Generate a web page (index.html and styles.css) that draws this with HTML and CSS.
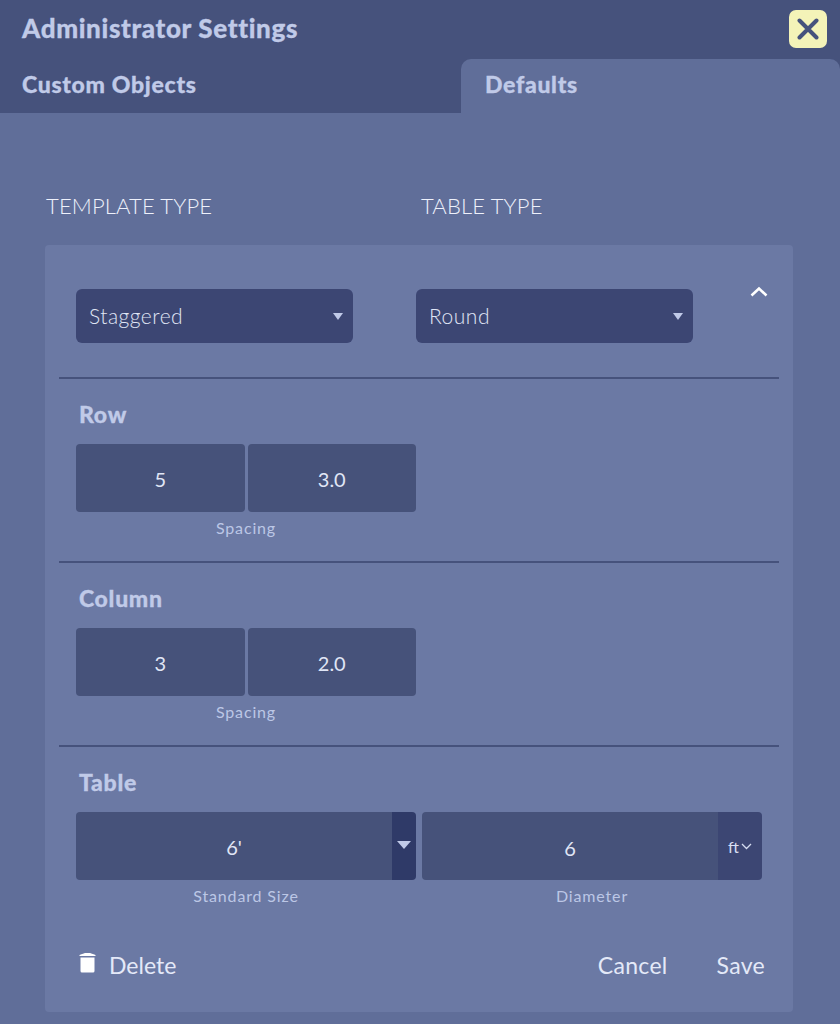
FILE: index.html
```html
<!DOCTYPE html>
<html lang="en">
<head>
    <meta charset="UTF-8">
    <meta name="viewport" content="width=device-width, initial-scale=1.0">
    <title>Administrator Settings</title>
    <link rel="stylesheet" href="styles.css">
</head>
<body>
    <header class="top">
        <div class="title-row">
            <h1>Administrator Settings</h1>
            <button class="close" aria-label="Close">
                <svg width="22" height="22" viewBox="0 0 22 22"><path d="M2.5 2.5 L19.5 19.5 M19.5 2.5 L2.5 19.5" fill="none" stroke="#46527c" stroke-width="4" stroke-linecap="round"/></svg>
            </button>
        </div>
        <nav class="tabs">
            <a class="tab">Custom Objects</a>
            <a class="tab active">Defaults</a>
        </nav>
    </header>

    <main class="content">
        <div class="col-labels">
            <span>TEMPLATE TYPE</span>
            <span>TABLE TYPE</span>
        </div>

        <div class="card">
            <div class="selects">
                <div class="select">Staggered<i class="caret"></i></div>
                <div class="select">Round<i class="caret"></i></div>
                <svg class="collapse" width="20" height="12" viewBox="0 0 20 12"><path d="M2.5 9.5 L10 2.5 L17.5 9.5" fill="none" stroke="#fff" stroke-width="2.6"/></svg>
            </div>

            <section class="group">
                <h2>Row</h2>
                <div class="fields">
                    <div class="box">5</div>
                    <div class="box">3.0</div>
                </div>
                <div class="hint">Spacing</div>
            </section>

            <section class="group">
                <h2>Column</h2>
                <div class="fields">
                    <div class="box">3</div>
                    <div class="box">2.0</div>
                </div>
                <div class="hint">Spacing</div>
            </section>

            <section class="group group-last">
                <h2>Table</h2>
                <div class="fields fields-wide">
                    <div class="wide-field">
                        <div class="box box-flat">6'</div>
                        <div class="arrow-cell"><i class="caret caret-big"></i></div>
                    </div>
                    <div class="wide-field">
                        <div class="box box-flat box-low">6</div>
                        <div class="unit-cell">ft<svg width="11" height="7" viewBox="0 0 11 7"><path d="M1 1 L5.5 5.5 L10 1" fill="none" stroke="#d5dcf0" stroke-width="1.3"/></svg></div>
                    </div>
                </div>
                <div class="hints-wide">
                    <div class="hint">Standard Size</div>
                    <div class="hint">Diameter</div>
                </div>
            </section>

            <footer class="actions">
                <a class="delete">
                    <svg width="17" height="21" viewBox="0 0 17 21"><path d="M0.5 3 C3 1.6 5.5 1.5 6 1 L11 1 C11.5 1.5 14 1.6 16.5 3 L16.5 4 L0.5 4 Z M1.5 5.4 L15.5 5.4 L15.5 19 Q15.5 20.5 14 20.5 L3 20.5 Q1.5 20.5 1.5 19 Z" fill="#fff"/></svg>
                    Delete
                </a>
                <div class="actions-right">
                    <a>Cancel</a>
                    <a>Save</a>
                </div>
            </footer>
        </div>
    </main>
</body>
</html>
```

FILE: styles.css
```css
* {
    box-sizing: border-box;
}

html, body {
    height: 1024px;
}

body {
    margin: 0;
    overflow: hidden;
    font-family: Lato, "Noto Sans", sans-serif;
    background-color: #606e99;
    color: #e4e9f8;
}

.top {
    background-color: #46527c;
    height: 113px;
}

.title-row {
    height: 59px;
    display: flex;
    justify-content: space-between;
    padding: 10px 13px 0 22px;
}

h1 {
    margin: 0;
    padding-top: 2px;
    font-size: 26px;
    line-height: 32px;
    font-weight: 900;
    letter-spacing: 0.65px;
    -webkit-text-stroke: 0.3px #c0cae8;
    color: #c0cae8;
}

.close {
    width: 38px;
    height: 38px;
    padding: 0;
    border: 0;
    border-radius: 7px;
    background-color: #f4f3b8;
    display: flex;
    align-items: center;
    justify-content: center;
}

.tabs {
    display: flex;
    height: 54px;
}

.tab {
    font-size: 23px;
    font-weight: 900;
    line-height: 50px;
    letter-spacing: 0.7px;
    -webkit-text-stroke: 0.3px #c0cae8;
    color: #c0cae8;
    width: 461px;
    padding-left: 22px;
}

.tab.active {
    flex: 1;
    background-color: #606e99;
    border-radius: 10px 10px 0 0;
    padding-left: 24px;
}

.content {
    padding: 79px 47px 0 45px;
}

.col-labels {
    display: grid;
    grid-template-columns: 375px 1fr;
    padding-left: 1px;
    height: 53px;
    font-size: 22px;
    line-height: 28px;
    font-weight: 300;
    letter-spacing: 0.15px;
    color: #eef1fb;
}

.card {
    height: 767px;
    background-color: #6b79a4;
    border-radius: 4px;
    padding: 44px 14px 0;
}

.selects {
    display: flex;
    gap: 63px;
    padding-left: 17px;
    height: 88px;
    position: relative;
}

.select {
    width: 277px;
    height: 54px;
    background-color: #3c4673;
    border-radius: 6px;
    padding-left: 13px;
    font-size: 21px;
    font-weight: 300;
    line-height: 53px;
    letter-spacing: 0.5px;
    color: #e0e6f6;
    position: relative;
}

.caret {
    position: absolute;
    right: 10px;
    top: 24px;
    border-left: 5px solid transparent;
    border-right: 5px solid transparent;
    border-top: 7px solid #c0cae8;
}

.collapse {
    position: absolute;
    left: 690px;
    top: -3px;
}

.group {
    height: 184px;
    border-top: 2px solid #46527c;
    padding: 19px 17px 0;
}

h2 {
    margin: 0 0 14px 3px;
    font-size: 23px;
    line-height: 32px;
    font-weight: 900;
    letter-spacing: 0.7px;
    -webkit-text-stroke: 0.3px #c0cae8;
    color: #c0cae8;
}

.fields {
    display: flex;
    gap: 3px;
    width: 340px;
}

.box {
    flex: 1;
    height: 68px;
    background-color: #46527a;
    border-radius: 4px;
    text-align: center;
    font-size: 20px;
    line-height: 70px;
    color: #e0e6f6;
}

.hint {
    width: 340px;
    margin-top: 7px;
    text-align: center;
    font-size: 16px;
    line-height: 18px;
    color: #bcc7e6;
    letter-spacing: 0.85px;
}

.fields-wide {
    width: 686px;
    gap: 6px;
}

.wide-field {
    flex: 1;
    display: flex;
    height: 68px;
    border-radius: 4px;
    overflow: hidden;
}

.box-flat {
    border-radius: 0;
}

.box-low {
    line-height: 72px;
}

.arrow-cell {
    width: 24px;
    background-color: #2f3a68;
    position: relative;
}

.caret-big {
    right: 5px;
    top: 29px;
    border-left-width: 7px;
    border-right-width: 7px;
    border-top-width: 8px;
}

.unit-cell {
    width: 44px;
    background-color: #3c4673;
    display: flex;
    align-items: center;
    justify-content: center;
    gap: 2px;
    font-size: 16px;
    color: #d8dff3;
}

.hints-wide {
    display: flex;
    gap: 6px;
}

.group-last {
    height: 160px;
}

.actions {
    display: flex;
    justify-content: space-between;
    align-items: center;
    margin-top: 46px;
    padding: 0 14px 0 20px;
    font-size: 23px;
    line-height: 28px;
    color: #e4e9f8;
}

.delete {
    display: flex;
    align-items: center;
    gap: 13px;
}

.delete svg {
    margin-top: -5px;
}

.actions-right {
    display: flex;
    gap: 49px;
    letter-spacing: 0.3px;
}
```
